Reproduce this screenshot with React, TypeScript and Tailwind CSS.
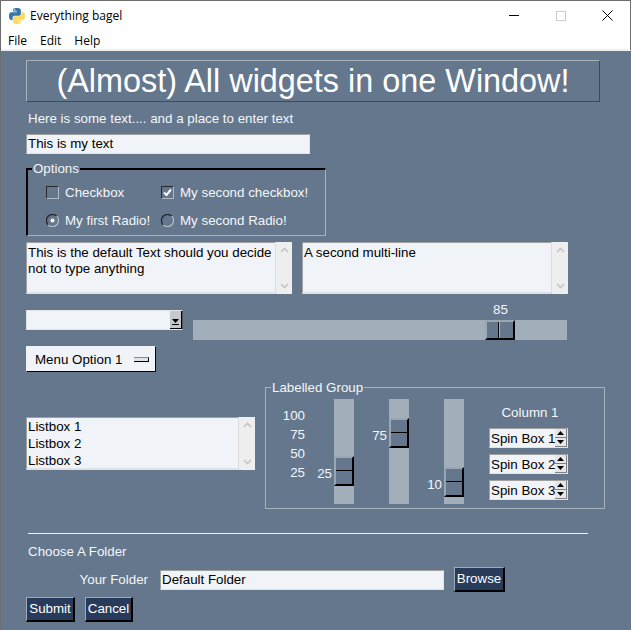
import React from "react";

const sans = "font-['Liberation_Sans',Arial,sans-serif]";

function PyLogo() {
  return (
    <svg viewBox="0 0 24 24" className="w-[16px] h-[16px]">
      <path fill="#3776ab" d="M14.25.18l.9.2.73.26.59.3.45.32.34.34.25.34.16.33.1.3.04.26.02.2-.01.13V8.5l-.05.63-.13.55-.21.46-.26.38-.3.31-.33.25-.35.19-.35.14-.33.1-.3.07-.26.04-.21.02H8.77l-.69.05-.59.14-.5.22-.41.27-.33.32-.27.35-.2.36-.15.37-.1.35-.07.32-.04.27-.02.21v3.06H3.17l-.21-.03-.28-.07-.32-.12-.35-.18-.36-.26-.36-.36-.35-.46-.32-.59-.28-.73-.21-.88-.14-1.05-.05-1.23.06-1.22.16-1.04.24-.87.32-.71.36-.57.4-.44.42-.33.42-.24.4-.16.36-.1.32-.05.24-.01h.16l.06.01h8.16v-.83H6.18l-.01-2.75-.02-.37.05-.34.11-.31.17-.28.25-.26.31-.23.38-.2.44-.18.51-.15.58-.12.64-.1.71-.06.77-.04.84-.02 1.27.05zm-6.3 1.98l-.23.33-.08.41.08.41.23.34.33.22.41.09.41-.09.33-.22.23-.34.08-.41-.08-.41-.23-.33-.33-.22-.41-.09-.41.09z" />
      <path fill="#ffd95a" d="M21.04 6.11l.28.06.32.12.35.18.36.27.36.35.35.47.32.59.28.73.21.88.14 1.04.05 1.23-.06 1.23-.16 1.04-.24.86-.32.71-.36.57-.4.45-.42.33-.42.24-.4.16-.36.09-.32.05-.24.02-.16-.01h-8.22v.82h5.84l.01 2.76.02.36-.05.34-.11.31-.17.29-.25.25-.31.24-.38.2-.44.17-.51.15-.58.13-.64.09-.71.07-.77.04-.84.01-1.27-.04-1.07-.14-.9-.2-.73-.25-.59-.3-.45-.33-.34-.34-.25-.34-.16-.33-.1-.3-.04-.25-.02-.2.01-.13v-5.34l.05-.64.13-.54.21-.46.26-.38.3-.32.33-.24.35-.2.35-.14.33-.1.3-.06.26-.04.21-.02.13-.01h5.84l.69-.05.59-.14.5-.21.41-.28.33-.32.27-.35.2-.36.15-.36.1-.35.07-.32.04-.28.02-.21V6.07h2.09l.14.01zm-6.47 14.25l-.23.33-.08.41.08.41.23.33.33.23.41.08.41-.08.33-.23.23-.33.08-.41-.08-.41-.23-.33-.33-.23-.41-.08-.41.08z" />
    </svg>
  );
}

function ScrollBar() {
  return (
    <div className="w-[17px] self-stretch bg-[#eeeeee] border-l border-[#dcdcdc] flex flex-col justify-between items-center py-[5px]">
      <svg width="9" height="6" viewBox="0 0 9 6"><path d="M1 5l3.5-3.5L8 5" fill="none" stroke="#c4c4c4" strokeWidth="1.6" /></svg>
      <svg width="9" height="6" viewBox="0 0 9 6"><path d="M1 1l3.5 3.5L8 1" fill="none" stroke="#c4c4c4" strokeWidth="1.6" /></svg>
    </div>
  );
}

function TextBox({ className, children, inner }: { className: string; children: React.ReactNode; inner: string }) {
  return (
    <div className={`flex bg-[#f0f3f7] text-black ${className}`}>
      <div className={`flex-1 border-t border-l border-[#a0a0a0] border-b-2 border-b-[#dfe1e4] pl-[1px] whitespace-pre-line ${inner}`}>
        {children}
      </div>
      <ScrollBar />
    </div>
  );
}

function Field({ className, children }: { className: string; children?: React.ReactNode }) {
  return (
    <div className={`bg-[#f0f3f7] text-black border border-[#a0a0a0] border-r-[#e3e3e3] border-b-[#e3e3e3] pl-[1px] leading-[18px] ${className}`}>
      {children}
    </div>
  );
}

function Button({ className, children }: { className: string; children: React.ReactNode }) {
  return (
    <div className={`h-[25px] bg-[#283b5b] text-white flex items-center justify-center border border-[#a0a9b5] border-r-2 border-b-2 border-r-black border-b-black ${className}`}>
      {children}
    </div>
  );
}

function Thumb({ horizontal, className }: { horizontal?: boolean; className: string }) {
  return (
    <div className={`absolute bg-[#64778d] border-t-2 border-l-2 border-[#9aa6b3] border-r-2 border-b-2 border-r-black border-b-black ${className}`}>
      <div className={horizontal ? "absolute left-[11px] top-0 bottom-0 w-[2px] border-l border-black border-r border-r-[#a8b4c0]" : "absolute top-[12px] left-0 right-0 h-[1px] bg-black"} />
    </div>
  );
}

function VSlider({ value, top, label }: { value: string; top: string; label: string }) {
  return (
    <div className="relative w-[20px] h-[105px] bg-[#a2afbb]">
      <span className={`absolute right-[22px] whitespace-nowrap ${label}`}>{value}</span>
      <Thumb className={`left-0 w-[20px] h-[30px] ${top}`} />
    </div>
  );
}

function Spin({ text }: { text: string }) {
  return (
    <div className="w-[79px] h-[20px] flex bg-[#f0f3f7] text-black border-t border-l border-[#a0a0a0] border-r border-b border-r-[#e3e3e3] border-b-[#e3e3e3]">
      <div className="flex-1 pl-[1px] leading-[19px] whitespace-nowrap">{text}</div>
      <div className="w-[12px] flex flex-col">
        <div className="flex-1 bg-[#e6e6e6] border-r border-b border-[#808080] flex items-center justify-center">
          <svg width="7" height="4" viewBox="0 0 7 4"><path d="M3.5 0L7 4H0z" fill="#000" /></svg>
        </div>
        <div className="flex-1 bg-[#e6e6e6] border-r border-b border-[#808080] flex items-center justify-center">
          <svg width="7" height="4" viewBox="0 0 7 4"><path d="M0 0h7L3.5 4z" fill="#000" /></svg>
        </div>
      </div>
    </div>
  );
}

function Check({ checked }: { checked?: boolean }) {
  return (
    <div className="w-[13px] h-[13px] border border-t-[#2a2a2a] border-l-[#2a2a2a] border-r-[#b0bac6] border-b-[#b0bac6] bg-[#64778d] flex items-center justify-center">
      {checked && (
        <svg width="9" height="9" viewBox="0 0 9 9"><path d="M1 4.5l2.5 2.5L8 1.5" fill="none" stroke="#fff" strokeWidth="2" /></svg>
      )}
    </div>
  );
}

function Radio({ checked }: { checked?: boolean }) {
  return (
    <svg width="13" height="13" viewBox="0 0 13 13">
      <path d="M2.2 10.8A6 6 0 0 1 10.8 2.2" fill="none" stroke="#222" strokeWidth="1.2" />
      <path d="M10.8 2.2A6 6 0 0 1 2.2 10.8" fill="none" stroke="#b4bec9" strokeWidth="1.2" />
      {checked && <circle cx="6.5" cy="6.5" r="2" fill="#fff" />}
    </svg>
  );
}

export default function App() {
  return (
    <div className={`w-[631px] h-[630px] overflow-hidden bg-[#64778d] flex flex-col text-[13.33px] text-[#f4f6f8] border-l border-[#6e6e6e] ${sans}`}>
      <div className="h-[51px] shrink-0 bg-white text-black font-['Open_Sans',sans-serif] text-[12px] border-t border-[#6e6e6e] border-b-2 border-b-[#f0f0f0] border-r border-r-[#6e6e6e]">
        <div className="h-[29px] flex items-center">
          <div className="ml-[8px] mr-[5px]"><PyLogo /></div>
          <span className="flex-1">Everything bagel</span>
          <div className="w-[46px] flex justify-center">
            <div className="w-[10px] h-[1px] bg-black" />
          </div>
          <div className="w-[46px] flex justify-center ml-[1px]">
            <div className="w-[10px] h-[10px] border border-[#cccccc]" />
          </div>
          <div className="w-[46px] flex justify-center">
            <svg width="11" height="11" viewBox="0 0 11 11"><path d="M.5.5l10 10M10.5.5l-10 10" stroke="#000" strokeWidth="1" /></svg>
          </div>
        </div>
        <div className="h-[19px] pt-[2px] flex items-center gap-[13px] pl-[7px]">
          <span>File</span><span>Edit</span><span>Help</span>
        </div>
      </div>

      <div className="flex-1 relative pl-[25px]">
        <div className="mt-[9px] w-[574px] h-[42px] border border-[#a8b2bd] border-r-[#3d4a5a] border-b-[#3d4a5a] flex items-center justify-center text-[32.4px] text-white">
          (Almost) All widgets in one Window!
        </div>
        <div className="mt-[8px] ml-[2px] h-[17px] leading-[17px]">Here is some text.... and a place to enter text</div>
        <Field className="mt-[7px] w-[284px] h-[20px]">This is my text</Field>

        <div className="relative mt-[14px] w-[300px] h-[68px] border-t-2 border-l-2 border-t-black border-l-black border-r border-b border-r-[#a8b2bd] border-b-[#a8b2bd]">
          <span className="absolute left-[4px] top-[-9px] bg-[#64778d] px-[1px] leading-[16px]">Options</span>
          <div className="pl-[18px] pt-[14px] grid grid-cols-[115px_auto] gap-y-[11px]">
            <div className="flex items-center gap-[6px] h-[17px]"><Check /><span>Checkbox</span></div>
            <div className="flex items-center gap-[6px] h-[17px]"><Check checked /><span>My second checkbox!</span></div>
            <div className="flex items-center gap-[6px] h-[17px]"><Radio checked /><span>My first Radio!</span></div>
            <div className="flex items-center gap-[6px] h-[17px]"><Radio /><span>My second Radio!</span></div>
          </div>
        </div>

        <div className="mt-[6px] flex gap-[10px]">
          <TextBox inner="pt-[2px] leading-[16px]" className="w-[266px] h-[52px]">{"This is the default Text should you decide\nnot to type anything"}</TextBox>
          <TextBox inner="pt-[2px] leading-[16px]" className="w-[266px] h-[52px]">A second multi-line</TextBox>
        </div>

        <div className="flex mt-[10px] h-[36px]">
          <div className="mt-[6px] w-[157px] h-[20px] flex bg-[#f0f3f7] border-t border-l border-[#e3e3e3] border-b border-r border-b-[#e3e3e3] border-r-[#555]">
            <div className="flex-1" />
            <div className="w-[12px] bg-[#c4c9cf] border-r border-b border-black flex items-end justify-center pb-[3px]">
              <svg width="7" height="6" viewBox="0 0 7 6"><path d="M0 0h7L3.5 4zM0 5h7v1H0z" fill="#000" /></svg>
            </div>
          </div>
          <div className="relative ml-[10px] mt-[16px] w-[374px] h-[20px] bg-[#a2afbb]">
            <span className="absolute left-[300px] top-[-18px] leading-[16px]">85</span>
            <Thumb horizontal className="left-[292px] top-0 w-[30px] h-[20px]" />
          </div>
        </div>

        <div className="mt-[6px] w-[130px] h-[26px] bg-[#f0f3f7] text-black border border-[#f0f3f7] border-r-black border-b-black flex items-center pl-[8px] pt-[1px]">
          <span className="flex-1">Menu Option 1</span>
          <div className="w-[15px] h-[5px] mr-[6px] bg-[#e0e3e7] border-b border-r border-black border-t border-t-[#888]" />
        </div>

        <div className="flex mt-[15px]">
          <TextBox inner="leading-[17px]" className="mt-[30px] w-[229px] h-[53px] self-start">{"Listbox 1\nListbox 2\nListbox 3"}</TextBox>
          <div className="relative ml-[10px] w-[340px] h-[122px] border border-[#a8b2bd]">
            <span className="absolute left-[5px] top-[-8px] bg-[#64778d] px-[1px] leading-[16px]">Labelled Group</span>
            <div className="flex pt-[11px]">
              <div className="w-[39px] pt-[7px] text-right leading-[19px]">
                <div>100</div><div>75</div><div>50</div><div>25</div>
              </div>
              <div className="ml-[29px] flex gap-[35px]">
                <VSlider value="25" top="top-[57px]" label="top-[65px]" />
                <VSlider value="75" top="top-[19px]" label="top-[27px]" />
                <VSlider value="10" top="top-[68px]" label="top-[76px]" />
              </div>
              <div className="ml-[25px] flex flex-col items-center gap-[6px]">
                <div className="h-[23px] pl-[3px] leading-[27px]">Column 1</div>
                <Spin text="Spin Box 1" />
                <Spin text="Spin Box 2" />
                <Spin text="Spin Box 3" />
              </div>
            </div>
          </div>
        </div>

        <div className="mt-[24px] ml-[2px] w-[560px] h-[1px] bg-[#f0f3f7]" />
        <div className="mt-[10px] ml-[2px] h-[16px] leading-[16px]">Choose A Folder</div>
        <div className="mt-[7px] flex items-center h-[25px]">
          <div className="w-[122px] text-right">Your Folder</div>
          <Field className="ml-[12px] w-[284px] h-[20px]">Default Folder</Field>
          <Button className="ml-[10px] w-[51px]">Browse</Button>
        </div>
        <div className="mt-[5px] flex gap-[10px]">
          <Button className="w-[49px]">Submit</Button>
          <Button className="w-[48px]">Cancel</Button>
        </div>
      </div>
    </div>
  );
}
